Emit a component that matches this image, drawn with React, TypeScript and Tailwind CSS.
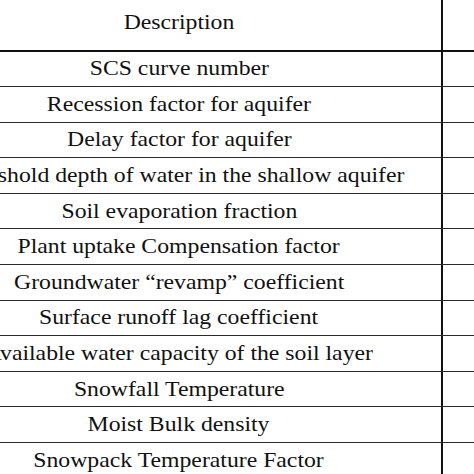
const rows = [
  "SCS curve number",
  "Recession factor for aquifer",
  "Delay factor for aquifer",
  "Threshold depth of water in the shallow aquifer",
  "Soil evaporation fraction",
  "Plant uptake Compensation factor",
  "Groundwater \u201crevamp\u201d coefficient",
  "Surface runoff lag coefficient",
  "Available water capacity of the soil layer",
  "Snowfall Temperature",
  "Moist Bulk density",
  "Snowpack Temperature Factor",
];

export default function App() {
  return (
    <div
      className="w-[474px] h-[474px] overflow-hidden bg-white text-[#111] text-[21px]"
      style={{ fontFamily: '"Liberation Serif", "Times New Roman", serif' }}
    >
      {/* header */}
      <div className="flex h-[51.5px] border-b-[2.5px] border-[#111]">
        <div className="ml-[-83px] w-[526px] shrink-0 flex items-center justify-center pb-[5px] border-r-[2.5px] border-[#111] leading-none">
          <span className="inline-block scale-x-[1.13] leading-[1.107]">Description</span>
        </div>
        <div className="flex-1" />
      </div>

      {/* rows */}
      {rows.map((r) => (
        <div key={r} className="flex h-[35.6px] border-b-[1.5px] border-[#2a2a2a]">
          <div className="ml-[-83px] w-[526px] shrink-0 flex items-center justify-center whitespace-nowrap border-r-[2.5px] border-[#111]">
            <span className="inline-block scale-x-[1.13] leading-[1.107]">{r}</span>
          </div>
          <div className="flex-1" />
        </div>
      ))}
    </div>
  );
}
